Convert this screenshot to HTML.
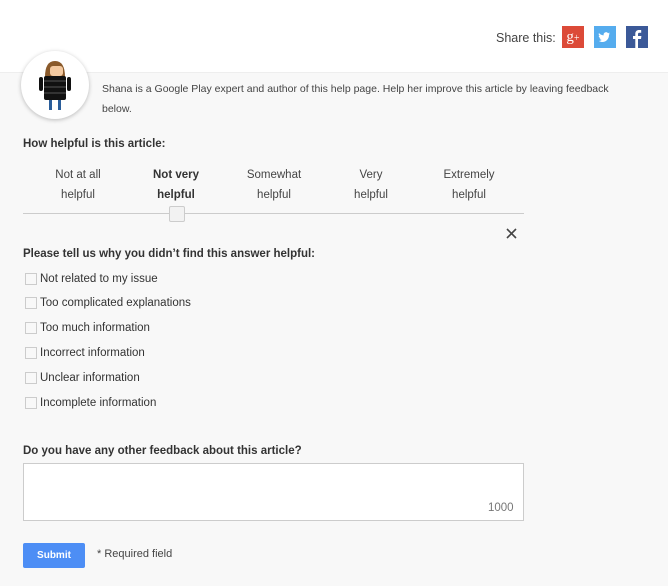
<!DOCTYPE html>
<html><head><style>
body{margin:0;width:668px;height:586px;background:#f8f8f8;font-family:"Liberation Sans",Arial,sans-serif;color:#333;position:relative;overflow:hidden}
.a{position:absolute}
.top{left:0;top:0;width:668px;height:72px;background:#fff;border-bottom:1px solid #eee}
.b{font-weight:bold;font-size:11.5px;color:#333}
.col{width:100px;text-align:center;font-size:11.5px;line-height:20px;color:#444}
.cb{left:25px;width:10px;height:10px;border:1px solid #ccc;background:#f8f8f8}
.ct{left:40px;font-size:11.5px;color:#333}
</style></head><body>
<div class="a top"></div>
<div class="a" style="left:496px;top:31px;font-size:12.5px;color:#444">Share this:</div>
<div class="a" style="left:562px;top:26px;width:22px;height:22px;background:#dc4a38;color:#fff;font:15px 'Liberation Serif',serif;text-align:center;line-height:22px">g<span style="font-size:10px">+</span></div>
<div class="a" style="left:594px;top:26px;width:22px;height:22px;background:#55acee"><svg width="22" height="22" viewBox="0 0 22 22"><path d="M16 7.5c-.5.2-1 .4-1.5.4.5-.3.9-.8 1.1-1.4-.5.3-1 .5-1.6.6a2.5 2.5 0 0 0-4.3 2.3C7.600 9.300 6 8.400 5 7c-.6 1-.3 2.300.8 3-.4 0-.8-.1-1.100-.3 0 1.200.9 2.200 2 2.500-.4.100-.8.100-1.100 0 .3 1 1.300 1.700 2.300 1.700A5 5 0 0 1 5 15c4.600 2.800 10-.5 10-6V8.600c.4-.3.8-.7 1-1.100z" fill="#fff"/></svg></div>
<div class="a" style="left:626px;top:26px;width:22px;height:22px;background:#3b5998"><svg width="22" height="22" viewBox="0 0 22 22"><path d="M12 22V13h3l.4-3H12V8.200c0-.8.300-1.400 1.500-1.400h1.700V4.100C14.900 4 14 4 13.100 4 10.900 4 9.300 5.300 9.300 7.800V10H7v3h2.300v9z" fill="#fff"/></svg></div>
<div class="a" style="left:21px;top:51px;width:68px;height:68px;border-radius:50%;background:#fff;box-shadow:0 1px 4px rgba(0,0,0,.25)"></div>
<svg class="a" style="left:30px;top:58px" width="50" height="54" viewBox="0 0 50 54">
<path d="M15 19 Q15 3 25 3 Q35 3 35 19 Z" fill="#8a5a2b"/><rect x="20" y="8" width="13" height="10" rx="3" fill="#f3c9a0"/>
<rect x="14" y="18" width="22" height="24" rx="2" fill="#111"/><rect x="14" y="22" width="22" height="2" fill="#333"/><rect x="14" y="28" width="22" height="2" fill="#333"/><rect x="14" y="34" width="22" height="2" fill="#333"/>
<rect x="9" y="19" width="4" height="14" rx="2" fill="#111"/><rect x="37" y="19" width="4" height="14" rx="2" fill="#111"/>
<rect x="19" y="42" width="3" height="10" fill="#2a5d9a"/><rect x="28" y="42" width="3" height="10" fill="#2a5d9a"/></svg>
<div class="a" style="left:102px;top:79px;width:530px;font-size:10.5px;line-height:20px;color:#444">Shana is a Google Play expert and author of this help page. Help her improve this article by leaving feedback below.</div>
<div class="a b" style="left:23px;top:138px">How helpful is this article:</div>
<div class="a col" style="left:28px;top:165px">Not at all<br>helpful</div>
<div class="a col" style="left:126px;top:165px;font-weight:bold;color:#333">Not very<br>helpful</div>
<div class="a col" style="left:224px;top:165px">Somewhat<br>helpful</div>
<div class="a col" style="left:321px;top:165px">Very<br>helpful</div>
<div class="a col" style="left:419px;top:165px">Extremely<br>helpful</div>
<div class="a" style="left:23px;top:213px;width:501px;height:1px;background:#ccc"></div>
<div class="a" style="left:169px;top:206px;width:14px;height:14px;border:1px solid #ccc;background:#f2f2f2;border-radius:2px"></div>
<svg class="a" style="left:506px;top:228px" width="11" height="11"><path d="M1 1L10 10M10 1L1 10" stroke="#444" stroke-width="1.6"/></svg>
<div class="a b" style="left:23px;top:248px">Please tell us why you didn’t find this answer helpful:</div>
<div class="a cb" style="top:273px"></div><div class="a ct" style="top:273px">Not related to my issue</div>
<div class="a cb" style="top:297px"></div><div class="a ct" style="top:297px">Too complicated explanations</div>
<div class="a cb" style="top:322px"></div><div class="a ct" style="top:322px">Too much information</div>
<div class="a cb" style="top:347px"></div><div class="a ct" style="top:347px">Incorrect information</div>
<div class="a cb" style="top:372px"></div><div class="a ct" style="top:372px">Unclear information</div>
<div class="a cb" style="top:397px"></div><div class="a ct" style="top:397px">Incomplete information</div>
<div class="a b" style="left:23px;top:445px">Do you have any other feedback about this article?</div>
<div class="a" style="left:23px;top:463px;width:499px;height:56px;border:1px solid #ccc;background:#fff"></div>
<div class="a" style="left:488px;top:502px;font-size:11.5px;color:#777">1000</div>
<div class="a" style="left:23px;top:543px;width:62px;height:25px;background:#4d8ef5;border-radius:2px;color:#fff;font-size:10px;font-weight:bold;text-align:center;line-height:25px">Submit</div>
<div class="a" style="left:97px;top:548px;font-size:11px;color:#444">* Required field</div>
</body></html>
